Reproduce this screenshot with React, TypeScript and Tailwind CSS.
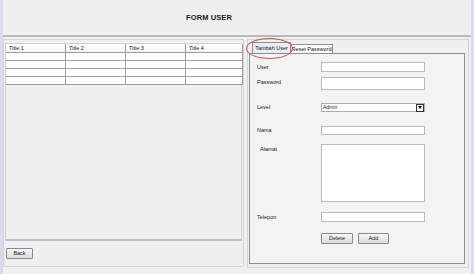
import React from "react";

const columns = ["Title 1", "Title 2", "Title 3", "Title 4"];
const rows = [0, 1, 2, 3];

function Field({ className = "" }: { className?: string }) {
  return <div className={`w-[104px] border border-[#b7bcc4] bg-white ${className}`} />;
}

function Btn({ label, w }: { label: string; w: string }) {
  return (
    <div
      className={`${w} h-[11px] flex items-center justify-center rounded-[1px] border border-[#8a8a8a] bg-gradient-to-b from-[#f6f6f6] to-[#dcdcdc] text-[5.5px] text-[#222]`}
    >
      {label}
    </div>
  );
}

export default function App() {
  return (
    <div
      className="w-[474px] h-[274px] overflow-hidden bg-[#f0f0f0] border-l-[3px] border-r-[3px] border-[#dcdbee] text-[#1a1a1a]"
      style={{ fontFamily: '"Liberation Sans", Arial, sans-serif' }}
    >
      {/* Header */}
      <div className="h-[37px] border-b-[2px] border-[#b9b9b9] bg-[#efefef] flex items-center justify-center pr-[56px]">
        <span className="text-[7.5px] font-bold tracking-[0.1px]">FORM USER</span>
      </div>

      <div className="flex gap-[3px] pt-[2px]">
        {/* Left: table + back */}
        <div className="w-[241px] h-[228px] border border-[#d4d4d4] px-[1px] pt-[3px]">
          <div className="h-[198px] border border-[#cfcfcf] border-b-[2px] border-b-[#b8c6d4] bg-[#f0f0f0]">
            <div className="grid grid-cols-[60px_60px_60px_57px] bg-white">
              {columns.map((c) => (
                <div
                  key={c}
                  className="h-[9px] flex items-center pl-[3px] border-r border-b border-[#9d9d9d] bg-gradient-to-b from-[#ffffff] to-[#f3f3f3] text-[5.5px]"
                >
                  {c}
                </div>
              ))}
              {rows.map((r) =>
                columns.map((c) => (
                  <div key={`${r}-${c}`} className="h-[8px] border-r border-b border-[#9d9d9d] bg-white" />
                ))
              )}
            </div>
          </div>
          <div className="pt-[7px] pl-[1px]">
            <Btn label="Back" w="w-[27px]" />
          </div>
        </div>

        {/* Right: tabs */}
        <div className="relative w-[222px] h-[229px] border border-[#d4d4d4] px-[1px] pt-[2px]">
          <div className="flex items-end pl-[3px]">
            <div className="h-[11px] w-[39px] flex items-center justify-center border border-b-0 border-[#8c8e94] bg-[#e7edf4] text-[5.5px] rounded-t-[1px]">
              Tambah User
            </div>
            <div className="h-[9px] w-[42px] flex items-center justify-center border border-l-0 border-b-0 border-[#8c8e94] bg-[#fbfbfb] text-[5.5px]">
              Reset Password
            </div>
          </div>
          <div className="h-[211px] w-[216px] border border-[#8c8e94] bg-[#f3f3f3] pl-[7px] pt-[8px]">
            <div className="flex items-center h-[10px]">
              <span className="w-[64px] text-[5.5px]">User</span>
              <Field className="h-[10px]" />
            </div>
            <div className="flex items-start h-[13px] mt-[5px]">
              <span className="w-[64px] text-[5.5px] pt-[1px]">Password</span>
              <Field className="h-[13px]" />
            </div>
            <div className="flex items-center h-[9px] mt-[13px]">
              <span className="w-[64px] text-[5.5px]">Level</span>
              <div className="w-[104px] h-[9px] border border-[#a9adb5] bg-white flex items-center justify-between pl-[1px]">
                <span className="text-[5px]">Admin</span>
                <div className="w-[8px] h-[8px] border border-[#333] bg-[#f4f4f4] flex items-center justify-center">
                  <div className="w-0 h-0 border-l-[2px] border-r-[2px] border-t-[3px] border-l-transparent border-r-transparent border-t-[#111]" />
                </div>
              </div>
            </div>
            <div className="flex items-center h-[9px] mt-[14px]">
              <span className="w-[64px] text-[5.5px]">Nama</span>
              <Field className="h-[9px]" />
            </div>
            <div className="flex items-start h-[58px] mt-[9px]">
              <span className="w-[64px] text-[5.5px] pl-[3px] pt-[1px]">Alamat</span>
              <Field className="h-[58px] bg-[#fafafa]" />
            </div>
            <div className="flex items-center h-[10px] mt-[10px]">
              <span className="w-[64px] text-[5.5px]">Telepon</span>
              <Field className="h-[10px]" />
            </div>
            <div className="flex gap-[5px] mt-[11px] pl-[64px]">
              <Btn label="Delete" w="w-[32px]" />
              <Btn label="Add" w="w-[31px]" />
            </div>
          </div>
          {/* red annotation ellipse */}
          <div className="absolute left-[-2px] top-[-2px] w-[47px] h-[21px] rounded-[50%] border border-[#c8584f]" />
        </div>
      </div>
    </div>
  );
}
